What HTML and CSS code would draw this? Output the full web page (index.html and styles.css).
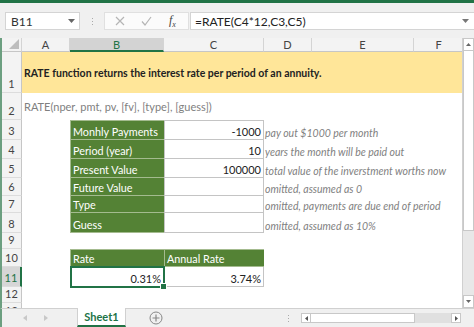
FILE: index.html
```html
<!DOCTYPE html>
<html lang="en">
<head>
  <meta charset="UTF-8"/>
  <title>RATE function</title>
  <link rel="stylesheet" href="styles.css">
</head>
<body>
<div class="app">
  <div class="titlebar"></div>

  <!-- formula bar -->
  <div class="formula-bar">
    <div class="name-box">
      <span>B11</span>
      <svg class="caret" width="7" height="4" viewBox="0 0 7 4"><path d="M0 0h7L3.5 4z" fill="#666"/></svg>
    </div>
    <div class="grip"><i></i><i></i><i></i></div>
    <div class="fx-buttons">
      <svg width="10" height="10" viewBox="0 0 10 10"><path d="M1 1l8 8M9 1l-8 8" stroke="#b5b5b5" stroke-width="1.2"/></svg>
      <svg width="11" height="10" viewBox="0 0 11 10"><path d="M1 5.5l3 3.5 6-8" stroke="#b5b5b5" stroke-width="1.2" fill="none"/></svg>
      <span class="fx">f<sub>x</sub></span>
    </div>
    <div class="formula-input">
      <span>=RATE(C4*12,C3,C5)</span>
      <svg class="caret" width="7" height="4" viewBox="0 0 7 4"><path d="M0 0h7L3.5 4z" fill="#777"/></svg>
    </div>
  </div>

  <div class="workspace">
    <div class="sheet">
      <!-- headers -->
      <div class="corner"><svg width="10" height="10" viewBox="0 0 10 10"><path d="M10 0v10H0z" fill="#bdbdbd"/></svg></div>
      <div class="ch">A</div>
      <div class="ch selected">B</div>
      <div class="ch">C</div>
      <div class="ch">D</div>
      <div class="ch">E</div>
      <div class="ch">F</div>

      <div class="rh">1</div>
      <div class="title span6">RATE function returns the interest rate per period of an annuity.</div>

      <div class="rh">2</div>
      <div class="syntax span6">RATE(nper, pmt, pv, [fv], [type], [guess])</div>

      <div class="rh">3</div>
      <div></div>
      <div class="label first">Monhly Payments</div>
      <div class="value first">-1000</div>
      <div class="note span3">pay out $1000 per month</div>

      <div class="rh">4</div>
      <div></div>
      <div class="label">Period (year)</div>
      <div class="value">10</div>
      <div class="note span3">years the month will be paid out</div>

      <div class="rh">5</div>
      <div></div>
      <div class="label">Present Value</div>
      <div class="value">100000</div>
      <div class="note span3">total value of the inverstment worths now</div>

      <div class="rh">6</div>
      <div></div>
      <div class="label">Future Value</div>
      <div class="value"></div>
      <div class="note span3">omitted, assumed as 0</div>

      <div class="rh">7</div>
      <div></div>
      <div class="label">Type</div>
      <div class="value"></div>
      <div class="note span3">omitted, payments are due end of period</div>

      <div class="rh">8</div>
      <div></div>
      <div class="label">Guess</div>
      <div class="value"></div>
      <div class="note span3">omitted, assumed as 10%</div>

      <div class="rh">9</div>
      <div class="span6"></div>

      <div class="rh">10</div>
      <div></div>
      <div class="label first">Rate</div>
      <div class="label first">Annual Rate</div>
      <div class="span3"></div>

      <div class="rh active">11</div>
      <div></div>
      <div class="value active-cell">0.31%</div>
      <div class="value">3.74%</div>
      <div class="span3"></div>

      <div class="rh">12</div>
      <div class="span6"></div>

      <div class="rh peek">13</div>
      <div class="span6"></div>
    </div>

    <div class="vscroll">
      <div class="arrow"><svg width="5" height="3" viewBox="0 0 5 3"><path d="M0 3h5L2.5 0z" fill="#666"/></svg></div>
      <div class="thumb"></div>
      <div class="track"></div>
      <div class="arrow"><svg width="5" height="3" viewBox="0 0 5 3"><path d="M0 0h5L2.5 3z" fill="#666"/></svg></div>
    </div>
  </div>

  <!-- sheet tabs -->
  <div class="tabbar">
    <div class="tab-nav">
      <svg width="4" height="6" viewBox="0 0 4 6"><path d="M4 0v6L0 3z" fill="#c8c8c8"/></svg>
      <svg width="4" height="6" viewBox="0 0 4 6"><path d="M0 0v6l4-3z" fill="#c8c8c8"/></svg>
    </div>
    <div class="tab">Sheet1</div>
    <div class="add-sheet">
      <svg width="14" height="14" viewBox="0 0 14 14"><circle cx="7" cy="7" r="6" fill="none" stroke="#888" stroke-width="1"/><path d="M7 3.5v7M3.5 7h7" stroke="#888" stroke-width="1.2"/></svg>
    </div>
    <div class="hgrip"><i></i><i></i><i></i></div>
    <div class="hscroll">
      <div class="harrow"><svg width="3" height="5" viewBox="0 0 3 5"><path d="M3 0v5L0 2.5z" fill="#555"/></svg></div>
      <div class="hthumb"></div>
      <div class="htrack"></div>
      <div class="harrow"><svg width="3" height="5" viewBox="0 0 3 5"><path d="M0 0v5l3-2.5z" fill="#555"/></svg></div>
    </div>
  </div>
</div>
</body>
</html>
```

FILE: styles.css
```css
body {
  margin: 0;
  font-family: Lato, "Liberation Sans", sans-serif;
  font-size: 11px;
  color: #222;
  background: #fff;
}

.app {
  width: 474px;
  height: 327px;
  overflow: hidden;
  display: flex;
  flex-direction: column;
  background: #f3f3f3;
}

.titlebar {
  height: 3px;
  background: #217346;
}

/* === formula bar === */
.formula-bar {
  height: 35px;
  display: flex;
  align-items: flex-start;
  padding-top: 9px;
  box-sizing: border-box;
  background: #f0f0f0;
}

.name-box {
  margin-left: 5px;
  width: 75px;
  height: 18px;
  box-sizing: border-box;
  background: #fff;
  border: 1px solid #d4d4d4;
  display: flex;
  align-items: center;
  justify-content: space-between;
  padding: 0 4px 0 5px;
  font-size: 12px;
  color: #333;
}

.grip {
  width: 24px;
  height: 18px;
  display: flex;
  flex-direction: column;
  align-items: center;
  justify-content: center;
  gap: 2px;
}

.grip i, .hgrip i {
  width: 1px;
  height: 1px;
  background: #aaa;
  display: block;
}

.fx-buttons {
  width: 85px;
  height: 18px;
  box-sizing: border-box;
  background: #fbfbfb;
  border: 1px solid #e0e0e0;
  display: flex;
  align-items: center;
  gap: 16px;
  padding-left: 10px;
}

.fx {
  font-family: "Liberation Serif", serif;
  font-style: italic;
  font-size: 12px;
  color: #444;
  margin-left: 1px;
}

.fx sub {
  font-size: 8px;
}

.formula-input {
  margin-left: 1px;
  flex: 1;
  height: 18px;
  box-sizing: border-box;
  background: #fff;
  border: 1px solid #d4d4d4;
  border-right: none;
  display: flex;
  align-items: center;
  justify-content: space-between;
  padding: 0 5px 0 4px;
  font-size: 12px;
  color: #222;
}

/* === sheet === */
.workspace {
  flex: 1;
  display: flex;
  min-height: 0;
}

.sheet {
  width: 462px;
  display: grid;
  grid-template-columns: 20px 48px 94px 100px 48px 102px 50px;
  grid-template-rows: 14px 41px 27px 20px 19px 19px 18px 17px 20px 16px 18px 20px 16px 16px;
  background: #fff;
  border-left: 2px solid #6c9f80;
  overflow: hidden;
  box-sizing: border-box;
}

.corner {
  background: #f3f3f3;
  border-right: 1px solid #d4d4d4;
  border-bottom: 1px solid #c6c6c6;
  display: flex;
  align-items: flex-end;
  justify-content: flex-end;
  padding: 0 2px 2px 0;
}

.ch {
  background: #f3f3f3;
  border-right: 1px solid #d4d4d4;
  border-bottom: 1px solid #c6c6c6;
  text-align: center;
  line-height: 13px;
  color: #444;
  font-size: 11px;
}

.ch.selected {
  background: #d3d3d3;
  border-bottom: 2px solid #217346;
  color: #217346;
}

.rh {
  background: #f3f3f3;
  border-right: 1px solid #c6c6c6;
  border-bottom: 1px solid #dcdcdc;
  display: flex;
  align-items: flex-end;
  justify-content: center;
  font-size: 11px;
  color: #444;
  line-height: 14px;
  padding-bottom: 1px;
  box-sizing: border-box;
  overflow: hidden;
}

.rh.peek {
  align-items: flex-start;
  padding-top: 1px;
}

.rh.active {
  background: #d6d6d6;
  border-right: 2px solid #217346;
  color: #217346;
}

.span6 { grid-column: span 6; }
.span3 { grid-column: span 3; }

.title {
  background: #ffe699;
  font-weight: bold;
  font-size: 10.5px;
  display: flex;
  align-items: center;
  padding-left: 2px;
}

.syntax {
  color: #808080;
  display: flex;
  align-items: center;
  padding-left: 2px;
  font-size: 11px;
}

.label {
  background: #548235;
  color: #fff;
  font-size: 10.8px;
  border-bottom: 1px solid #a4bb8f;
  border-left: 1px solid #a4bb8f;
  display: flex;
  align-items: flex-end;
  padding: 0 0 1px 2px;
  box-sizing: border-box;
}

.label.first {
  border-top: 1px solid #a4bb8f;
}

.value {
  border-bottom: 1px solid #c4c4c4;
  border-right: 1px solid #c4c4c4;
  border-left: 1px solid #c4c4c4;
  display: flex;
  align-items: flex-end;
  justify-content: flex-end;
  padding: 0 2px 1px 0;
  box-sizing: border-box;
  font-size: 11px;
  color: #222;
}

.value.first {
  border-top: 1px solid #c4c4c4;
}

.active-cell {
  position: relative;
}

.active-cell::after {
  content: "";
  position: absolute;
  left: -1px;
  top: -1px;
  right: -2px;
  bottom: -2px;
  border: 2px solid #217346;
}

.active-cell::before {
  content: "";
  position: absolute;
  right: -4px;
  bottom: -4px;
  width: 5px;
  height: 5px;
  background: #217346;
  border: 1px solid #fff;
  z-index: 1;
}

.note {
  color: #7f7f7f;
  font-style: italic;
  font-size: 10.5px;
  display: flex;
  align-items: flex-end;
  padding: 0 0 1px 1px;
  white-space: nowrap;
}

/* === vertical scrollbar === */
.vscroll {
  width: 12px;
  display: flex;
  flex-direction: column;
  background: #e8e8e8;
  border-left: 1px solid #d0d0d0;
  box-sizing: border-box;
}

.vscroll .arrow {
  height: 11px;
  display: flex;
  align-items: center;
  justify-content: center;
  background: #fff;
  border: 1px solid #c8c8c8;
}

.vscroll .thumb {
  height: 179px;
  background: #fff;
  border: 1px solid #c8c8c8;
  border-top: none;
}

.vscroll .track {
  flex: 1;
}

/* === tab bar === */
.tabbar {
  height: 19px;
  display: flex;
  align-items: stretch;
  background: #f0f0f0;
  border-top: 1px solid #d0d0d0;
  border-left: 2px solid #6c9f80;
  box-sizing: border-box;
}

.tab-nav {
  width: 75px;
  display: flex;
  align-items: center;
  gap: 17px;
  padding-left: 21px;
  box-sizing: border-box;
}

.tab {
  width: 47px;
  background: #fff;
  color: #217346;
  font-weight: bold;
  font-size: 11px;
  text-align: center;
  line-height: 17px;
  border-bottom: 2px solid #217346;
  border-left: 1px solid #d0d0d0;
  border-right: 1px solid #d0d0d0;
  margin-top: -1px;
}

.add-sheet {
  width: 60px;
  display: flex;
  align-items: center;
  justify-content: center;
}

.hgrip {
  width: 115px;
  display: flex;
  flex-direction: column;
  align-items: flex-end;
  justify-content: center;
  gap: 2px;
  padding-right: 12px;
  box-sizing: border-box;
}

.hscroll {
  width: 160px;
  display: flex;
  align-items: center;
}

.harrow {
  width: 10px;
  height: 10px;
  background: #fff;
  border: 1px solid #c8c8c8;
  display: flex;
  align-items: center;
  justify-content: center;
  box-sizing: border-box;
}

.hthumb {
  width: 104px;
  height: 10px;
  background: #fff;
  border: 1px solid #c8c8c8;
  border-left: none;
  box-sizing: border-box;
}

.htrack {
  flex: 1;
  height: 10px;
  background: #e0e0e0;
}
```
